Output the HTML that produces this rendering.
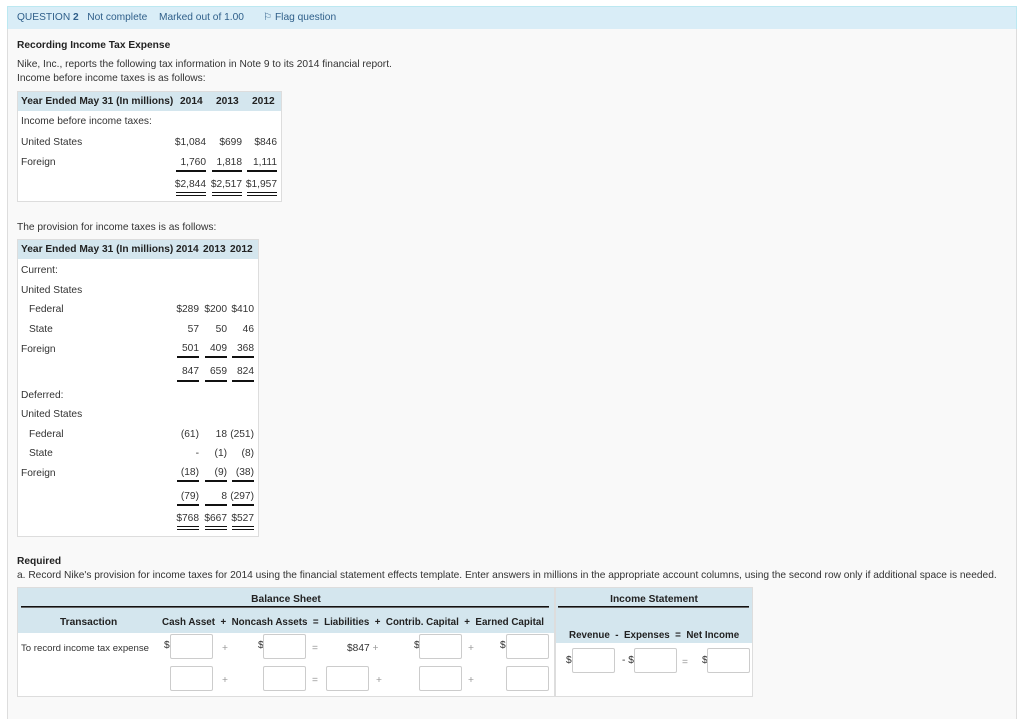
<!DOCTYPE html>
<html><head><meta charset="utf-8"><style>
body{margin:0;width:1024px;height:705px;background:#fff;font-family:"Liberation Sans",sans-serif;font-size:10.2px;color:#333;position:relative;overflow:hidden}
div,span{position:absolute;white-space:nowrap}
.hd{left:7px;top:6px;width:1008px;height:22px;background:#d9edf7;border:1px solid #bce8f1;border-bottom:1px solid #e8d0d8}
.ct{left:7px;top:29px;width:1008px;height:690px;background:#f9f9f9;border-left:1px solid #ddd;border-right:1px solid #ddd}
.tb{background:#fff;border:1px solid #ddd}
.th{background:#d4e6ee}
b{font-weight:bold;color:#222}
.r{text-align:right}
.ln{background:#111;height:2px}
.dl{border-top:1px solid #111;border-bottom:1px solid #111;height:2px}
.in{background:#fff;border:1px solid #ccc;border-radius:2px;width:41px;height:23px}
.c{text-align:center}
</style></head><body>
<div class="hd"></div>
<span style="left:17px;top:12px;color:#2f5f8a">QUESTION <b style="color:#2f5f8a">2</b> &nbsp; Not complete</span>
<span style="left:159px;top:12px;color:#2f5f8a">Marked out of 1.00</span>
<span style="left:263px;top:12px;color:#2f5f8a">⚐ Flag question</span>
<div class="ct"></div>
<span style="left:17px;top:40px"><b>Recording Income Tax Expense</b></span>
<span style="left:17px;top:59px">Nike, Inc., reports the following tax information in Note 9 to its 2014 financial report.</span>
<span style="left:17px;top:73px">Income before income taxes is as follows:</span>

<div class="tb" style="left:17px;top:91px;width:263px;height:109px"></div>
<div class="th" style="left:18px;top:92px;width:263px;height:19px"></div>
<span style="left:21px;top:96px"><b>Year Ended May 31 (In millions)</b></span>
<span style="left:180px;top:96px"><b>2014</b></span>
<span style="left:216px;top:96px"><b>2013</b></span>
<span style="left:252px;top:96px"><b>2012</b></span>
<span style="left:21px;top:116px">Income before income taxes:</span>
<span style="left:21px;top:137px">United States</span>
<span style="left:21px;top:157px">Foreign</span>
<span class="r" style="left:160px;width:46px;top:137px">$1,084</span>
<span class="r" style="left:200px;width:42px;top:137px">$699</span>
<span class="r" style="left:235px;width:42px;top:137px">$846</span>
<span class="r" style="left:160px;width:46px;top:157px">1,760</span>
<span class="r" style="left:200px;width:42px;top:157px">1,818</span>
<span class="r" style="left:235px;width:42px;top:157px">1,111</span>
<div class="ln" style="left:176px;top:170px;width:30px"></div>
<div class="ln" style="left:212px;top:170px;width:30px"></div>
<div class="ln" style="left:247px;top:170px;width:30px"></div>
<span class="r" style="left:160px;width:46px;top:179px">$2,844</span>
<span class="r" style="left:200px;width:42px;top:179px">$2,517</span>
<span class="r" style="left:235px;width:42px;top:179px">$1,957</span>
<div class="dl" style="left:176px;top:192px;width:30px"></div>
<div class="dl" style="left:212px;top:192px;width:30px"></div>
<div class="dl" style="left:247px;top:192px;width:30px"></div>

<span style="left:17px;top:222px">The provision for income taxes is as follows:</span>
<div class="tb" style="left:17px;top:239px;width:240px;height:296px"></div>
<div class="th" style="left:18px;top:240px;width:240px;height:19px"></div>
<span style="left:21px;top:244px"><b>Year Ended May 31 (In millions)</b></span>
<span style="left:176px;top:244px"><b>2014</b></span>
<span style="left:203px;top:244px"><b>2013</b></span>
<span style="left:230px;top:244px"><b>2012</b></span>
<span style="left:21px;top:265px">Current:</span>
<span style="left:21px;top:285px">United States</span>
<span style="left:29px;top:304px">Federal</span>
<span style="left:29px;top:324px">State</span>
<span style="left:21px;top:344px">Foreign</span>
<span style="left:21px;top:390px">Deferred:</span>
<span style="left:21px;top:409px">United States</span>
<span style="left:29px;top:429px">Federal</span>
<span style="left:29px;top:448px">State</span>
<span style="left:21px;top:468px">Foreign</span>
<span class="r" style="left:160px;width:39px;top:304px">$289</span><span class="r" style="left:190px;width:37px;top:304px">$200</span><span class="r" style="left:217px;width:37px;top:304px">$410</span>
<span class="r" style="left:160px;width:39px;top:324px">57</span><span class="r" style="left:190px;width:37px;top:324px">50</span><span class="r" style="left:217px;width:37px;top:324px">46</span>
<span class="r" style="left:160px;width:39px;top:343px">501</span><span class="r" style="left:190px;width:37px;top:343px">409</span><span class="r" style="left:217px;width:37px;top:343px">368</span>
<div class="ln" style="left:177px;top:356px;width:22px"></div><div class="ln" style="left:205px;top:356px;width:22px"></div><div class="ln" style="left:232px;top:356px;width:22px"></div>
<span class="r" style="left:160px;width:39px;top:366px">847</span><span class="r" style="left:190px;width:37px;top:366px">659</span><span class="r" style="left:217px;width:37px;top:366px">824</span>
<div class="ln" style="left:177px;top:380px;width:22px"></div><div class="ln" style="left:205px;top:380px;width:22px"></div><div class="ln" style="left:232px;top:380px;width:22px"></div>
<span class="r" style="left:160px;width:39px;top:429px">(61)</span><span class="r" style="left:190px;width:37px;top:429px">18</span><span class="r" style="left:217px;width:37px;top:429px">(251)</span>
<span class="r" style="left:160px;width:39px;top:448px">-</span><span class="r" style="left:190px;width:37px;top:448px">(1)</span><span class="r" style="left:217px;width:37px;top:448px">(8)</span>
<span class="r" style="left:160px;width:39px;top:467px">(18)</span><span class="r" style="left:190px;width:37px;top:467px">(9)</span><span class="r" style="left:217px;width:37px;top:467px">(38)</span>
<div class="ln" style="left:177px;top:480px;width:22px"></div><div class="ln" style="left:205px;top:480px;width:22px"></div><div class="ln" style="left:232px;top:480px;width:22px"></div>
<span class="r" style="left:160px;width:39px;top:491px">(79)</span><span class="r" style="left:190px;width:37px;top:491px">8</span><span class="r" style="left:217px;width:37px;top:491px">(297)</span>
<div class="ln" style="left:177px;top:504px;width:22px"></div><div class="ln" style="left:205px;top:504px;width:22px"></div><div class="ln" style="left:232px;top:504px;width:22px"></div>
<span class="r" style="left:160px;width:39px;top:513px">$768</span><span class="r" style="left:190px;width:37px;top:513px">$667</span><span class="r" style="left:217px;width:37px;top:513px">$527</span>
<div class="dl" style="left:177px;top:526px;width:22px"></div><div class="dl" style="left:205px;top:526px;width:22px"></div><div class="dl" style="left:232px;top:526px;width:22px"></div>

<span style="left:17px;top:556px"><b>Required</b></span>
<span style="left:17px;top:570px">a. Record Nike's provision for income taxes for 2014 using the financial statement effects template. Enter answers in millions in the appropriate account columns, using the second row only if additional space is needed.</span>

<div class="tb" style="left:17px;top:587px;width:536px;height:108px"></div>
<div class="th" style="left:18px;top:588px;width:536px;height:45px"></div>
<span class="c" style="left:18px;width:536px;top:594px"><b>Balance Sheet</b></span>
<div style="left:21px;top:606px;width:528px;height:1px;background:#111;border-bottom:1px solid #666"></div>
<span style="left:60px;top:617px"><b>Transaction</b></span>
<span style="left:162px;top:617px;font-size:9.8px"><b>Cash Asset&nbsp; + &nbsp;Noncash Assets&nbsp; = &nbsp;Liabilities&nbsp; + &nbsp;Contrib. Capital&nbsp; + &nbsp;Earned Capital</b></span>
<span style="left:21px;top:643px;font-size:9.6px">To record income tax expense</span>
<span style="left:164px;top:640px">$</span><div class="in" style="left:170px;top:634px"></div>
<span style="left:222px;top:643px;color:#999">+</span>
<span style="left:258px;top:640px">$</span><div class="in" style="left:263px;top:634px"></div>
<span style="left:312px;top:643px;color:#999">=</span>
<span style="left:347px;top:643px">$847 <span style="position:static;color:#999">+</span></span>
<span style="left:414px;top:640px">$</span><div class="in" style="left:419px;top:634px"></div>
<span style="left:468px;top:643px;color:#999">+</span>
<span style="left:500px;top:640px">$</span><div class="in" style="left:506px;top:634px"></div>
<div class="in" style="left:170px;top:666px"></div>
<span style="left:222px;top:675px;color:#999">+</span>
<div class="in" style="left:263px;top:666px"></div>
<span style="left:312px;top:675px;color:#999">=</span>
<div class="in" style="left:326px;top:666px"></div>
<span style="left:376px;top:675px;color:#999">+</span>
<div class="in" style="left:419px;top:666px"></div>
<span style="left:468px;top:675px;color:#999">+</span>
<div class="in" style="left:506px;top:666px"></div>

<div class="tb" style="left:555px;top:587px;width:196px;height:108px"></div>
<div class="th" style="left:556px;top:588px;width:196px;height:55px"></div>
<span class="c" style="left:556px;width:196px;top:594px"><b>Income Statement</b></span>
<div style="left:558px;top:606px;width:191px;height:1px;background:#111;border-bottom:1px solid #666"></div>
<span style="left:569px;top:630px;font-size:9.8px"><b>Revenue &nbsp;- &nbsp;Expenses &nbsp;= &nbsp;Net Income</b></span>
<span style="left:566px;top:655px">$</span><div class="in" style="left:572px;top:648px"></div>
<span style="left:622px;top:655px">- $</span><div class="in" style="left:634px;top:648px"></div>
<span style="left:682px;top:657px;color:#999">=</span>
<span style="left:702px;top:655px">$</span><div class="in" style="left:707px;top:648px"></div>
</body></html>
